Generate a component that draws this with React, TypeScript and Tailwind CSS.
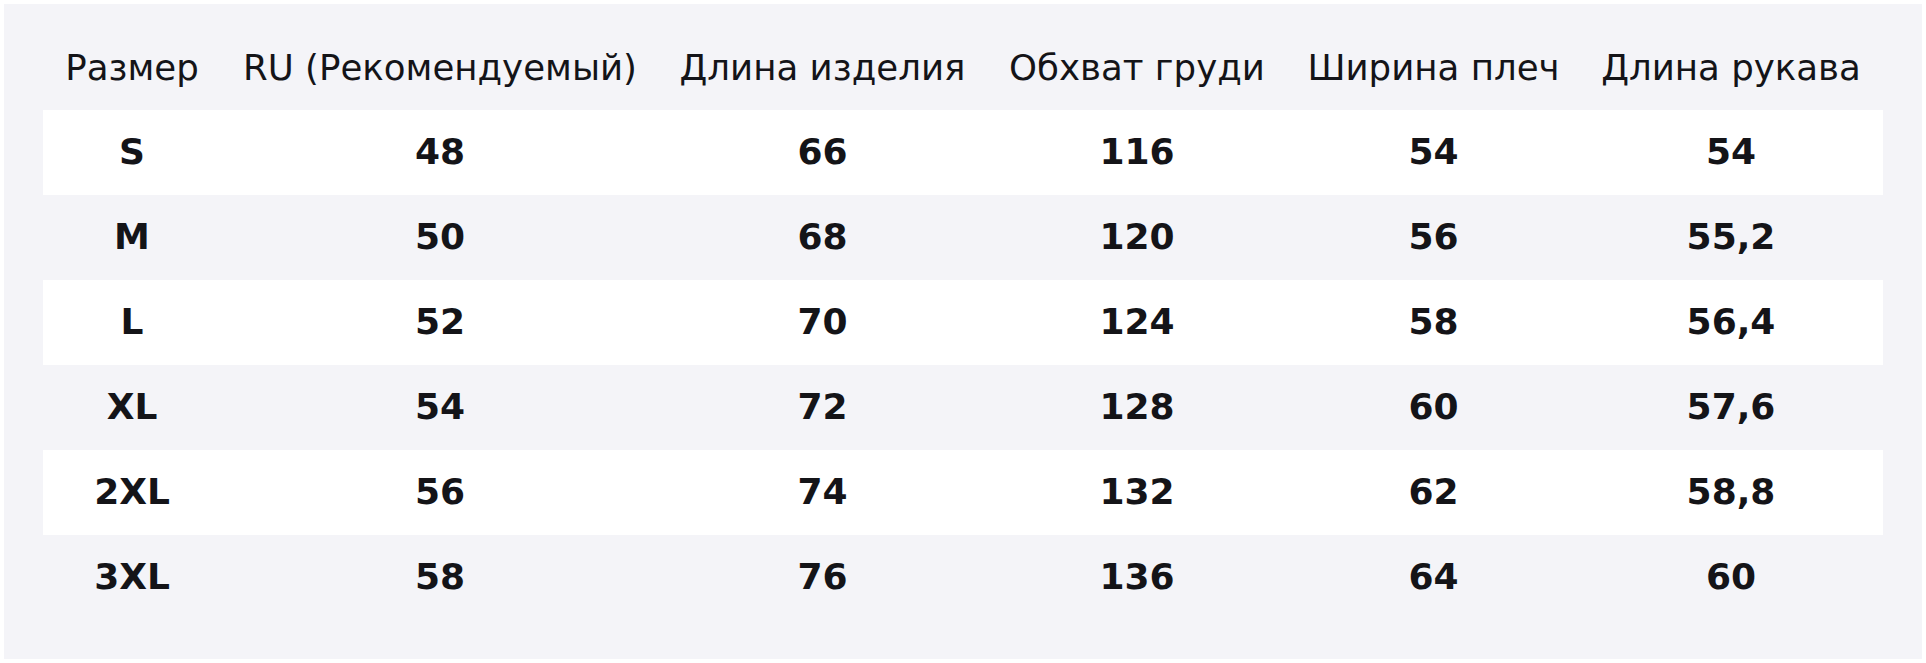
import React from 'react'

const headers = ['Размер', 'RU (Рекомендуемый)', 'Длина изделия', 'Обхват груди', 'Ширина плеч', 'Длина рукава']

const rows: string[][] = [
  ['S', '48', '66', '116', '54', '54'],
  ['M', '50', '68', '120', '56', '55,2'],
  ['L', '52', '70', '124', '58', '56,4'],
  ['XL', '54', '72', '128', '60', '57,6'],
  ['2XL', '56', '74', '132', '62', '58,8'],
  ['3XL', '58', '76', '136', '64', '60'],
]

const widths = ['w-[178px]', 'w-[438px]', 'w-[327px]', 'w-[302px]', 'w-[291px]', 'w-[304px]']

export default function App() {
  return (
    <div className="bg-white p-1 font-['DejaVu_Sans',sans-serif] text-[#141418]">
      <div className="bg-[#f4f4f8] pt-[21px] px-[39px] pb-[39px]">
        <table className="w-[1840px] table-fixed border-collapse">
          <colgroup>
            {widths.map((w, i) => <col key={i} className={w} />)}
          </colgroup>
          <thead>
            <tr className="h-[85px]">
              {headers.map(h => (
                <th key={h} className="p-0 text-center text-[35.6px] font-normal whitespace-nowrap">{h}</th>
              ))}
            </tr>
          </thead>
          <tbody>
            {rows.map((r, i) => (
              <tr key={r[0]} className={i % 2 === 0 ? 'h-[85px] bg-white' : 'h-[85px]'}>
                {r.map((c, j) => (
                  <td key={j} className="p-0 pb-[2px] text-center text-[36px] font-bold">{c}</td>
                ))}
              </tr>
            ))}
          </tbody>
        </table>
      </div>
    </div>
  )
}
